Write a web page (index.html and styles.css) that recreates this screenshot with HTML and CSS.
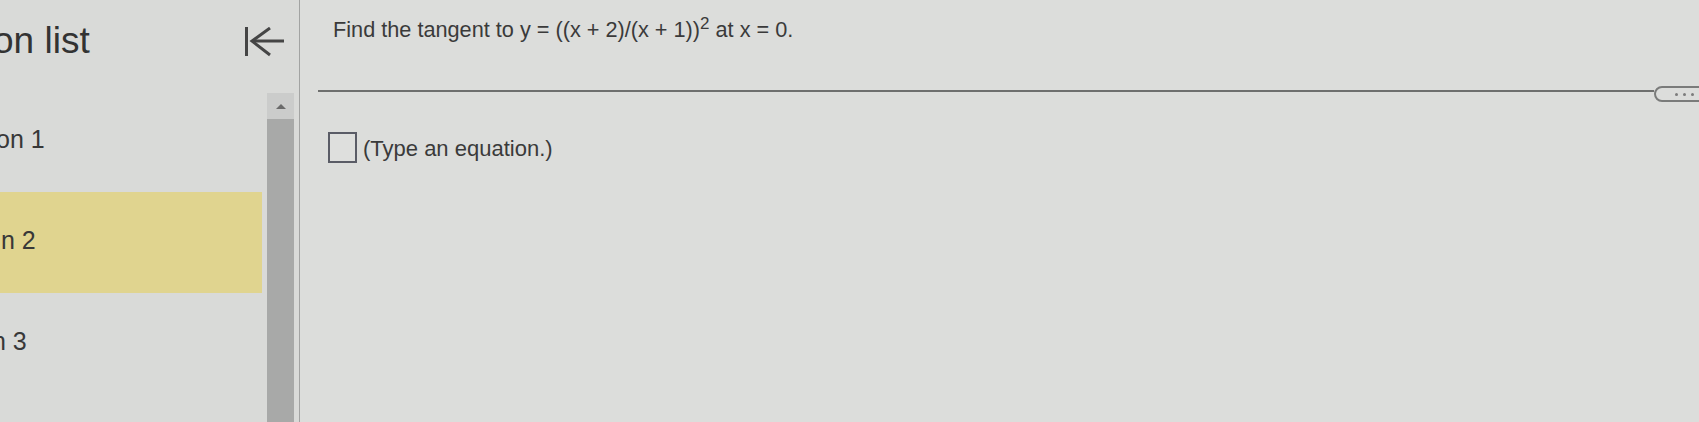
FILE: index.html
```html
<!DOCTYPE html>
<html lang="en">
<head>
<meta charset="utf-8">
<title>Question</title>
<link rel="stylesheet" href="styles.css">
</head>
<body>
<div class="app">
  <aside class="sidebar">
    <div class="side-head">
      <h1 class="side-title">on list</h1>
      <button class="collapse" type="button" aria-label="Collapse">
        <svg width="40" height="30" viewBox="0 0 40 30" fill="none" stroke="#454545" stroke-width="3" stroke-linecap="butt" stroke-linejoin="miter">
          <line x1="1.5" y1="0" x2="1.5" y2="29"/>
          <line x1="7" y1="14" x2="39" y2="14"/>
          <polyline points="25,1 7,14 25,28"/>
        </svg>
      </button>
    </div>
    <div class="side-body">
      <ul class="qlist">
        <li class="qitem q1">on 1</li>
        <li class="qitem q2 current">n 2</li>
        <li class="qitem q3">n 3</li>
      </ul>
      <div class="scrollbar">
        <div class="scroll-up"><span class="tri"></span></div>
        <div class="thumb"></div>
      </div>
    </div>
  </aside>
  <main class="content">
    <p class="question">Find the tangent to y = ((x + 2)/(x + 1))<sup class="exp">2</sup> at x = 0.</p>
    <div class="rule-row">
      <div class="rule"></div>
      <div class="more-pill"><span class="dot"></span><span class="dot"></span><span class="dot"></span></div>
    </div>
    <div class="answer">
      <span class="box"></span>
      <span class="hint">(Type an equation.)</span>
    </div>
  </main>
</div>
</body>
</html>
```

FILE: styles.css
```css
html, body {
  margin: 0;
  padding: 0;
}
body {
  width: 1699px;
  height: 422px;
  overflow: hidden;
  background: #dadbd9;
  font-family: "Liberation Sans", Arial, sans-serif;
  color: #3c3c3c;
}
.app {
  display: flex;
  height: 422px;
}
.sidebar {
  width: 299px;
  flex: none;
  border-right: 1px solid #a2a3a2;
  background: #d9dad8;
  display: flex;
  flex-direction: column;
  overflow: hidden;
}
.side-head {
  height: 91px;
  box-sizing: border-box;
  display: flex;
  justify-content: space-between;
  align-items: flex-start;
  padding: 22px 14px 0 0;
}
.side-title {
  margin: 0 0 0 -7px;
  font-size: 37px;
  line-height: 37px;
  font-weight: normal;
  color: #333333;
  white-space: nowrap;
}
.collapse {
  margin: 5px 0 0 0;
  padding: 0;
  border: 0;
  background: none;
  width: 40px;
  height: 30px;
  display: block;
}
.collapse svg { display: block; }
.side-body {
  flex: 1;
  display: flex;
}
.qlist {
  list-style: none;
  margin: 0;
  padding: 0;
  width: 262px;
  flex: none;
  overflow: hidden;
}
.qitem {
  height: 101px;
  box-sizing: border-box;
  padding-top: 36px;
  font-size: 25px;
  line-height: 25px;
  color: #383838;
  white-space: nowrap;
}
.q1 { text-indent: -4px; }
.q2 { text-indent: 1px; }
.q3 { text-indent: -8px; }
.current {
  background: #e0d48f;
}
.scrollbar {
  width: 27px;
  margin: 2px 0 0 5px;
  flex: none;
  display: flex;
  flex-direction: column;
}
.scroll-up {
  height: 26px;
  background: #cbcccb;
  display: flex;
  justify-content: center;
  align-items: center;
}
.tri {
  width: 0;
  height: 0;
  border-left: 5px solid transparent;
  border-right: 5px solid transparent;
  border-bottom: 5px solid #6a6a6a;
}
.thumb {
  flex: 1;
  background: #a8a9a8;
}
.content {
  flex: 1;
  display: flex;
  flex-direction: column;
  padding-top: 19px;
  background: #dcdddb;
}
.question {
  margin: 0 0 0 33px;
  font-size: 21.7px;
  line-height: 21px;
  color: #3a3a3a;
  white-space: nowrap;
}
.exp {
  font-size: 17px;
  line-height: 0;
  vertical-align: 8px;
}
.rule-row {
  margin: 46px -15px 0 18px;
  height: 16px;
  display: flex;
  align-items: flex-start;
}
.rule {
  flex: 1;
  height: 2px;
  margin-top: 4px;
  background: #6e6f6e;
}
.more-pill {
  width: 60px;
  height: 16px;
  box-sizing: border-box;
  border: 2px solid #7a7b7a;
  border-radius: 8px;
  display: flex;
  align-items: center;
  justify-content: center;
  gap: 5px;
}
.dot {
  width: 3px;
  height: 3px;
  border-radius: 50%;
  background: #7c7c7c;
}
.answer {
  margin: 30px 0 0 28px;
  display: flex;
  align-items: center;
  gap: 6px;
}
.box {
  width: 29px;
  height: 31px;
  box-sizing: border-box;
  border: 2px solid #5a5c66;
  background: #dedfdd;
}
.hint {
  font-size: 22px;
  line-height: 22px;
  padding-top: 3px;
  color: #3a3a3a;
  white-space: nowrap;
}
```
